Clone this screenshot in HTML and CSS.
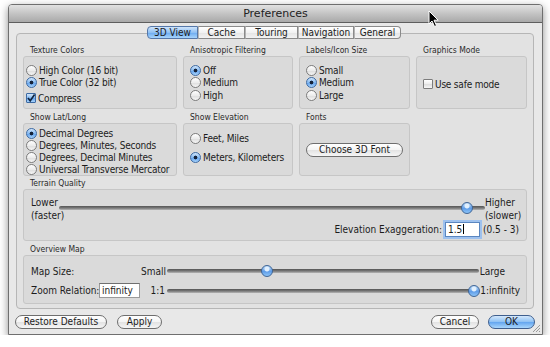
FILE: index.html
```html
<!DOCTYPE html>
<html lang="en">
<head>
  <meta charset="UTF-8" />
  <title>Preferences</title>
  <link rel="stylesheet" href="styles.css">
</head>
<body>
  <div class="window">
    <div class="titlebar">Preferences</div>

    <div class="tabs">
      <div class="tab active w-3d">3D View</div>
      <div class="tab w-cache">Cache</div>
      <div class="tab w-touring">Touring</div>
      <div class="tab w-nav">Navigation</div>
      <div class="tab w-general">General</div>
    </div>

    <div class="panel">
      <div class="cols">
        <div class="group">
          <div class="group-label">Texture Colors</div>
          <div class="group-box box-tex">
            <div class="radio">High Color (16 bit)</div>
            <div class="radio on">True Color (32 bit)</div>
            <div class="check on compress"><span class="box"><svg width="10" height="10" viewBox="0 0 10 10"><path d="M2 5 L4.2 7.8 L8.6 1.5" fill="none" stroke="#10243f" stroke-width="1.6"/></svg></span>Compress</div>
          </div>
        </div>
        <div class="group">
          <div class="group-label">Anisotropic Filtering</div>
          <div class="group-box box-pad">
            <div class="radio on">Off</div>
            <div class="radio tall">Medium</div>
            <div class="radio">High</div>
          </div>
        </div>
        <div class="group">
          <div class="group-label">Labels/Icon Size</div>
          <div class="group-box box-pad">
            <div class="radio">Small</div>
            <div class="radio on tall">Medium</div>
            <div class="radio">Large</div>
          </div>
        </div>
        <div class="group">
          <div class="group-label">Graphics Mode</div>
          <div class="group-box box-mode">
            <div class="check"><span class="box"></span>Use safe mode</div>
          </div>
        </div>
      </div>

      <div class="cols">
        <div class="group">
          <div class="group-label">Show Lat/Long</div>
          <div class="group-box box-lat">
            <div class="radio on">Decimal Degrees</div>
            <div class="radio">Degrees, Minutes, Seconds</div>
            <div class="radio">Degrees, Decimal Minutes</div>
            <div class="radio">Universal Transverse Mercator</div>
          </div>
        </div>
        <div class="group">
          <div class="group-label">Show Elevation</div>
          <div class="group-box box-elev">
            <div class="radio">Feet, Miles</div>
            <div class="radio on">Meters, Kilometers</div>
          </div>
        </div>
        <div class="group">
          <div class="group-label">Fonts</div>
          <div class="group-box box-fonts">
            <div class="btn btn-font">Choose 3D Font</div>
          </div>
        </div>
      </div>

      <div class="group terrain">
        <div class="group-label">Terrain Quality</div>
        <div class="group-box box-terrain">
          <div class="slider-row">
            <div class="end-left">Lower<br>(faster)</div>
            <div class="track"><span class="thumb t-terrain"></span></div>
            <div class="end-right">Higher<br>(slower)</div>
          </div>
          <div class="exag">
            Elevation Exaggeration:
            <span class="field focus">1.5<span class="caret"></span></span>
            (0.5 - 3)
          </div>
        </div>
      </div>

      <div class="group overview">
        <div class="group-label">Overview Map</div>
        <div class="group-box box-over">
          <div class="map-row">
            <div class="lbl-map">Map Size:</div>
            <div class="min">Small</div>
            <div class="track"><span class="thumb t-map"></span></div>
            <div class="max">Large</div>
          </div>
          <div class="zoom-row">
            <div class="lbl-zoom">Zoom Relation:</div>
            <span class="field infinity">infinity</span>
            <div class="min">1:1</div>
            <div class="track"><span class="thumb t-zoom"></span></div>
            <div class="max">1:infinity</div>
          </div>
        </div>
      </div>
    </div>

    <div class="footer">
      <div class="btn w-restore">Restore Defaults</div>
      <div class="btn w-apply">Apply</div>
      <div class="spacer"></div>
      <div class="btn w-cancel">Cancel</div>
      <div class="btn ok w-ok">OK</div>
    </div>

    <svg class="grip" width="10" height="10" viewBox="0 0 10 10">
      <path d="M9 2 L2 9 M9 5 L5 9 M9 8 L8 9" stroke="#9a9a9a" stroke-width="1"/>
    </svg>

    <svg class="cursor" width="12" height="18" viewBox="0 0 12 18">
      <path d="M1 1 L1 14 L4 11 L6.5 16.5 L8.5 15.6 L6 10.2 L10.2 10.2 Z" fill="#000" stroke="#fff" stroke-width="1"/>
    </svg>
  </div>
</body>
</html>
```

FILE: styles.css
```css
body {
  margin: 0;
  background: #fff;
  font-family: "DejaVu Sans Condensed", "Liberation Sans", sans-serif;
  font-size: 10px;
  color: #1c1c1c;
  white-space: nowrap;
}
.window {
  position: relative;
  margin: 4px 0 0 8px;
  width: 535px;
  height: 331px;
  box-sizing: border-box;
  border: 1px solid #6f6f6f;
  border-radius: 4px 4px 0 0;
  background: #e8e8e8;
  box-shadow: 0 3px 8px rgba(0, 0, 0, 0.45);
}
.titlebar {
  height: 17px;
  line-height: 17px;
  text-align: center;
  font-family: "DejaVu Sans", sans-serif;
  font-size: 11px;
  color: #222;
  border-radius: 3px 3px 0 0;
  background: linear-gradient(#e2e2e2, #c4c4c4 50%, #a9a9a9);
  border-bottom: 1px solid #5e5e5e;
}

/* tabs */
.tabs {
  position: relative;
  z-index: 1;
  display: flex;
  justify-content: center;
  margin: 3px 3px -6px 0;
  height: 13px;
}
.tab {
  box-sizing: border-box;
  height: 13px;
  line-height: 11px;
  text-align: center;
  font-size: 10px;
  border: 1px solid #8a8a8a;
  border-left: 1px solid #b4b4b4;
  background: linear-gradient(#ffffff, #f2f2f2 50%, #e4e4e4 51%, #f3f3f3);
}
.tab:first-child { border-left-color: #8a8a8a; border-radius: 4px 0 0 4px; }
.tab:last-child { border-radius: 0 4px 4px 0; }
.tab.active {
  border-color: #5577a8;
  background: linear-gradient(#cfe4fb, #8fc0f3 50%, #6aa9ef 51%, #a8d4fb);
}
.w-3d { width: 51px; }
.w-cache { width: 47px; }
.w-touring { width: 53px; }
.w-nav { width: 56px; }
.w-general { width: 47px; }

/* panel */
.panel {
  margin: 0 8px 0 7px;
  height: 276px;
  box-sizing: border-box;
  padding: 11px 6px 0;
  border: 1px solid #b6b6b6;
  border-radius: 4px;
  background: #e2e2e2;
}
.cols {
  display: grid;
  grid-template-columns: 154px 110px 111px 111px;
  column-gap: 6px;
  margin-bottom: 3px;
}
.group-label {
  height: 11px;
  line-height: 11px;
  padding-left: 7px;
  font-size: 8.5px;
  color: #2a2a2a;
}
.group-box {
  box-sizing: border-box;
  border: 1px solid #c6c6c6;
  border-radius: 3px;
  background: #dadada;
}

.radio, .check {
  display: flex;
  align-items: center;
  height: 12px;
  letter-spacing: -0.2px;
}
.radio::before {
  content: "";
  flex: none;
  width: 11px;
  height: 11px;
  margin-right: 2px;
  box-sizing: border-box;
  border-radius: 50%;
  border: 1px solid #7c7c7c;
  background: linear-gradient(#ffffff, #ececec 50%, #dcdcdc 51%, #f6f6f6);
}
.radio.on::before {
  border-color: #3d6aa3;
  background: radial-gradient(circle, #15233a 0 1.6px, transparent 2.2px),
    linear-gradient(#d2e6fb, #84b9f1 50%, #5f9fec 51%, #a7d3fb);
}
.check .box {
  flex: none;
  width: 10px;
  height: 10px;
  margin-right: 2px;
  box-sizing: border-box;
  border: 1px solid #7c7c7c;
  border-radius: 1px;
  background: linear-gradient(#ffffff, #ececec 50%, #dcdcdc 51%, #f6f6f6);
}
.check.on .box {
  border-color: #3d6aa3;
  background: linear-gradient(#d2e6fb, #84b9f1 50%, #5f9fec 51%, #a7d3fb);
}
.check .box svg { display: block; margin: -1px 0 0 -1px; }

.box-tex { height: 53px; padding: 7px 0 0 2px; }
.compress { margin-top: 4px; }
.box-pad { height: 53px; padding: 7px 0 0 6px; }
.box-pad .radio.tall { height: 13px; }
.box-mode {
  height: 53px;
  padding: 21px 0 0 6px;
}
.box-lat { height: 53px; padding: 3px 0 0 2px; }
.box-elev { height: 53px; padding: 8px 0 0 6px; }
.box-elev .radio { margin-bottom: 7px; }
.box-fonts { height: 53px; padding: 19px 0 0 6px; }

/* buttons */
.btn {
  box-sizing: border-box;
  height: 14px;
  line-height: 12px;
  text-align: center;
  font-size: 10px;
  border: 1px solid #6e6e6e;
  border-radius: 7px;
  background: linear-gradient(#ffffff, #f4f4f4 50%, #e2e2e2 51%, #f6f6f6);
}
.btn.ok {
  border-color: #3f5f8e;
  background: linear-gradient(#d4e8fc, #8cc0f3 50%, #62a4ef 51%, #a9d6fc);
}
.btn-font { width: 97px; }

/* terrain quality */
.terrain { margin-top: -1px; }
.box-terrain { height: 52px; padding: 6px 7px 0 7px; }
.slider-row { display: flex; height: 26px; }
.end-left { width: 28px; line-height: 13px; }
.end-right { width: 34px; line-height: 13px; }
.track {
  position: relative;
  flex: 1;
  height: 4px;
  border-radius: 2px;
  background: linear-gradient(#555, #777 50%, #b6b6b6);
}
.slider-row .track { margin-top: 10px; }
.thumb {
  position: absolute;
  top: -4px;
  width: 12px;
  height: 12px;
  margin-left: -6px;
  box-sizing: border-box;
  border-radius: 50%;
  border: 1px solid #3f6596;
  background: radial-gradient(circle at 50% 30%, #e2f0fd 0 2px, transparent 3px),
    linear-gradient(#b8d8f8, #5f9de8 55%, #8cc4f8);
}
.t-terrain { left: 95.8%; }
.t-map { left: 32%; }
.t-zoom { left: 100%; }
.exag {
  display: flex;
  justify-content: flex-end;
  align-items: center;
  gap: 3px;
  height: 15px;
}
.field {
  box-sizing: border-box;
  display: inline-block;
  height: 15px;
  line-height: 13px;
  padding-left: 2px;
  background: #fff;
  border: 1px solid #9a9a9a;
  border-top-color: #6f6f6f;
}
.field.focus {
  width: 35px;
  border-color: #5a86c0;
  box-shadow: 0 0 0 2px #9ec1ee;
}
.caret {
  display: inline-block;
  width: 1px;
  height: 10px;
  margin-left: 1px;
  vertical-align: -1px;
  background: #000;
}

/* overview map */
.overview { margin-top: 3px; }
.box-over { height: 49px; padding: 8px 0 0 7px; }
.map-row, .zoom-row {
  display: flex;
  align-items: center;
  height: 14px;
}
.zoom-row { margin-top: 5px; height: 15px; }
.lbl-map { width: 110px; }
.lbl-zoom { width: 68px; }
.infinity { width: 41px; }
.min { width: 25px; text-align: right; }
.map-row .track { margin: 0 1px; }
.zoom-row .track { margin: 0 6px 0 2px; }
.map-row .max { margin-right: 21px; }
.zoom-row .max { margin-right: 6px; }

/* footer */
.footer {
  display: flex;
  align-items: center;
  gap: 10px;
  padding: 6px 7px 0 6px;
}
.spacer { flex: 1; }
.w-restore { width: 92px; }
.w-apply { width: 45px; }
.w-cancel { width: 48px; margin-right: -1px; }
.w-ok { width: 47px; }

.grip { position: absolute; right: 1px; bottom: 1px; }
.cursor { position: absolute; left: 419px; top: 5px; }
```
